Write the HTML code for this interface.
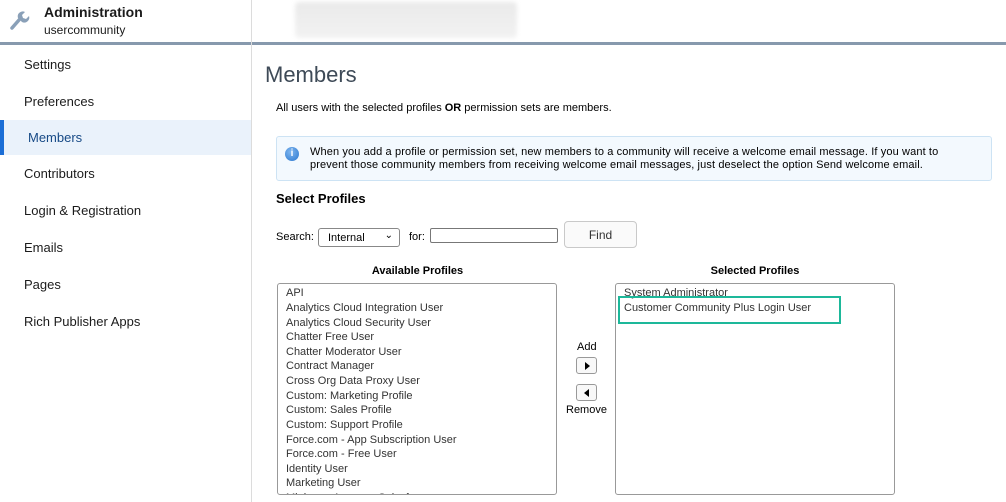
<!DOCTYPE html>
<html><head><meta charset="utf-8"><style>
*{box-sizing:border-box;margin:0;padding:0}
body{width:1006px;height:502px;overflow:hidden;background:#fff;font-family:"Liberation Sans",Arial,sans-serif;color:#16325c;position:relative}
.abs{position:absolute}
.nav{position:absolute;left:24px;font-size:13px;color:#1b1b1b;white-space:nowrap}
.sm{font-size:11px;color:#000;font-family:"Liberation Sans",Arial,sans-serif}
.item{position:absolute;left:8px;font-size:11px;color:#333;white-space:nowrap}
</style></head><body>
<!-- header -->
<svg class="abs" style="left:9px;top:11px" width="22" height="20" viewBox="0 0 22 20"><path d="M3 17 L10 9" stroke="#8aa0b8" stroke-width="3.5" stroke-linecap="round"/><path d="M9 7 A5 5 0 0 1 16 1 L13 4 L14 7 L17 8 L20 5 A5 5 0 0 1 13 11 Z" fill="#8aa0b8"/></svg>
<div class="abs" style="left:44px;top:4px;font-size:14px;font-weight:bold;color:#1b1b1b">Administration</div>
<div class="abs" style="left:44px;top:23px;font-size:12px;color:#1b1b1b">usercommunity</div>
<div class="abs" style="left:295px;top:2px;width:222px;height:36px;background:linear-gradient(#eaeaea,#f2f2f2);filter:blur(2px);border-radius:4px"></div>
<div class="abs" style="left:0;top:42px;width:1006px;height:3px;background:#8799ad"></div>
<div class="abs" style="left:251px;top:0;width:1px;height:502px;background:#dcdcdc"></div>
<!-- sidebar -->
<div class="abs" style="left:0;top:120px;width:251px;height:35px;background:#eaf2fb"></div>
<div class="abs" style="left:0;top:120px;width:4px;height:35px;background:#1b6ed6"></div>
<div class="nav" style="top:57px">Settings</div>
<div class="nav" style="top:94px">Preferences</div>
<div class="nav" style="top:130px;left:28px;color:#174a86">Members</div>
<div class="nav" style="top:166px">Contributors</div>
<div class="nav" style="top:203px">Login &amp; Registration</div>
<div class="nav" style="top:240px">Emails</div>
<div class="nav" style="top:277px">Pages</div>
<div class="nav" style="top:314px">Rich Publisher Apps</div>
<!-- main -->
<div class="abs" style="left:265px;top:62px;font-size:22px;color:#3e4a57">Members</div>
<div class="abs sm" style="left:276px;top:102px">All users with the selected profiles <b>OR</b> permission sets are members.</div>
<div class="abs" style="left:276px;top:136px;width:716px;height:45px;background:#f3f9fe;border:1px solid #cde3f4;border-radius:3px"></div>
<div class="abs" style="left:285px;top:147px;width:14px;height:14px;border-radius:50%;background:radial-gradient(circle at 40% 35%,#7fb6ef,#2a77cf);color:#fff;font-size:10px;font-weight:bold;text-align:center;line-height:14px">i</div>
<div class="abs sm" style="left:310px;top:146px;line-height:13px;letter-spacing:0.12px">When you add a profile or permission set, new members to a community will receive a welcome email message. If you want to<br>prevent those community members from receiving welcome email messages, just deselect the option Send welcome email.</div>
<div class="abs" style="left:276px;top:191px;font-size:13px;font-weight:bold;color:#000">Select Profiles</div>
<div class="abs sm" style="left:276px;top:231px">Search:</div>
<div class="abs" style="left:318px;top:228px;width:82px;height:19px;border:1px solid #888;border-radius:3px;font-size:11px;color:#000;padding:3px 0 0 9px">Internal<span style="position:absolute;right:6px;top:1px;font-size:10px">&#8964;</span></div>
<div class="abs sm" style="left:409px;top:231px">for:</div>
<div class="abs" style="left:430px;top:228px;width:128px;height:15px;border:1px solid #777;border-radius:2px"></div>
<div class="abs" style="left:564px;top:221px;width:73px;height:27px;border:1px solid #c9c9c9;border-radius:4px;background:#fafafa;font-size:12px;color:#333;text-align:center;line-height:26px">Find</div>
<div class="abs" style="left:277px;top:265px;width:281px;text-align:center;font-size:11px;font-weight:bold;color:#000">Available Profiles</div>
<div class="abs" style="left:615px;top:265px;width:280px;text-align:center;font-size:11px;font-weight:bold;color:#000">Selected Profiles</div>
<div class="abs" style="left:277px;top:283px;width:280px;height:212px;border:1px solid #999;border-radius:3px;overflow:hidden">
<div class="item" style="top:3px">API</div>
<div class="item" style="top:18px">Analytics Cloud Integration User</div>
<div class="item" style="top:33px">Analytics Cloud Security User</div>
<div class="item" style="top:47px">Chatter Free User</div>
<div class="item" style="top:62px">Chatter Moderator User</div>
<div class="item" style="top:76px">Contract Manager</div>
<div class="item" style="top:91px">Cross Org Data Proxy User</div>
<div class="item" style="top:106px">Custom: Marketing Profile</div>
<div class="item" style="top:120px">Custom: Sales Profile</div>
<div class="item" style="top:135px">Custom: Support Profile</div>
<div class="item" style="top:150px">Force.com - App Subscription User</div>
<div class="item" style="top:164px">Force.com - Free User</div>
<div class="item" style="top:179px">Identity User</div>
<div class="item" style="top:193px">Marketing User</div>
<div class="item" style="top:208px">Minimum Access - Salesforce</div>
</div>
<div class="abs" style="left:615px;top:283px;width:280px;height:212px;border:1px solid #999;border-radius:3px">
<div class="item" style="top:3px">System Administrator</div>
<div class="item" style="top:18px">Customer Community Plus Login User</div>
</div>
<div class="abs" style="left:618px;top:296px;width:223px;height:28px;border:2px solid #1db89a"></div>
<div class="abs sm" style="left:577px;top:341px">Add</div>
<div class="abs" style="left:576px;top:357px;width:21px;height:17px;border:1px solid #999;border-radius:3px;background:#f8f8f8"><div style="position:absolute;left:8px;top:4px;border-left:5px solid #000;border-top:4px solid transparent;border-bottom:4px solid transparent"></div></div>
<div class="abs" style="left:576px;top:384px;width:21px;height:17px;border:1px solid #999;border-radius:3px;background:#f8f8f8"><div style="position:absolute;left:7px;top:4px;border-right:5px solid #000;border-top:4px solid transparent;border-bottom:4px solid transparent"></div></div>
<div class="abs sm" style="left:566px;top:404px">Remove</div>
</body></html>
